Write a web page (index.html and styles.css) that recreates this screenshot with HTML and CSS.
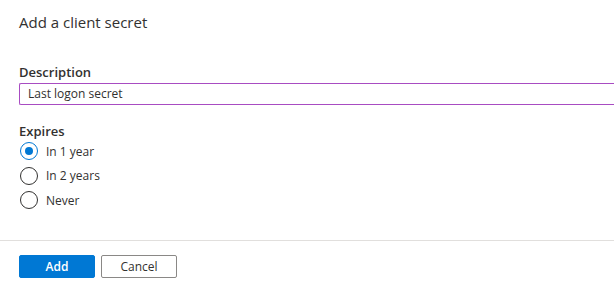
FILE: index.html
```html
<!DOCTYPE html>
<html>
<head>
<meta charset="utf-8">
<link rel="stylesheet" href="styles.css">
</head>
<body>
<div class="panel">
  <div class="content">
    <h1 class="title">Add a client secret</h1>
    <div class="field desc">
      <label class="label">Description</label>
      <div class="input">Last logon secret</div>
    </div>
    <div class="field expires">
      <div class="label">Expires</div>
      <div class="radios">
        <div class="radio checked"><span class="circle"></span><span class="rtext">In 1 year</span></div>
        <div class="radio"><span class="circle"></span><span class="rtext">In 2 years</span></div>
        <div class="radio"><span class="circle"></span><span class="rtext">Never</span></div>
      </div>
    </div>
  </div>
  <div class="footer">
    <button class="btn primary">Add</button>
    <button class="btn secondary">Cancel</button>
  </div>
</div>
</body>
</html>
```
FILE: styles.css
```css
html, body {
  margin: 0;
  padding: 0;
  background: #ffffff;
  font-family: "Open Sans", "Noto Sans", sans-serif;
  color: #323130;
  width: 614px;
  height: 291px;
  overflow: hidden;
}
.panel {
  display: flex;
  flex-direction: column;
}
.content {
  padding: 11px 0 0 19px;
}
.title {
  margin: 0;
  font-size: 15px;
  font-weight: 400;
  line-height: 22px;
  color: #323130;
}
.field {
  display: flex;
  flex-direction: column;
}
.desc {
  margin-top: 30px;
}
.label {
  font-size: 13px;
  font-weight: 600;
  line-height: 18px;
  color: #323130;
}
.input {
  margin-top: 2px;
  height: 20px;
  border: 1px solid #a84cc2;
  border-right: none;
  border-radius: 2px 0 0 2px;
  font-size: 12px;
  line-height: 20px;
  padding-left: 8px;
  color: #323130;
}
.expires {
  margin-top: 17px;
}
.radios {
  display: flex;
  flex-direction: column;
  gap: 6px;
  margin-top: 2px;
}
.radio {
  display: flex;
  align-items: center;
  height: 18.5px;
}
.circle {
  width: 16px;
  height: 16px;
  border: 1px solid #323130;
  border-radius: 50%;
  box-sizing: content-box;
  position: relative;
  margin-left: 1px;
}
.radio.checked .circle {
  border-color: #0078d4;
}
.radio.checked .circle::after {
  content: "";
  position: absolute;
  left: 4px;
  top: 4px;
  width: 8px;
  height: 8px;
  border-radius: 50%;
  background: #0078d4;
}
.rtext {
  margin-left: 8px;
  font-size: 12px;
  color: #323130;
}
.footer {
  margin-top: 30px;
  border-top: 1px solid #e1dfdd;
  padding: 14px 0 0 19px;
  display: flex;
  gap: 6px;
}
.btn {
  width: 76px;
  height: 23px;
  font-family: inherit;
  font-size: 12px;
  font-weight: 600;
  border-radius: 2px;
  padding: 0;
  cursor: pointer;
}
.primary {
  background: #0078d4;
  border: 1px solid #0078d4;
  color: #ffffff;
}
.secondary {
  background: #ffffff;
  border: 1px solid #8a8886;
  color: #323130;
  font-weight: 400;
}
```
